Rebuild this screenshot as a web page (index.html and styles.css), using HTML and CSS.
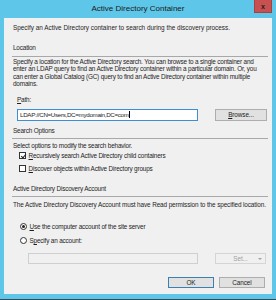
FILE: index.html
```html
<!DOCTYPE html>
<html lang="en">
<head>
  <meta charset="UTF-8" />
  <title>Active Directory Container</title>
  <link rel="stylesheet" href="styles.css">
</head>
<body>
  <div class="window">
    <!-- title bar -->
    <div class="titlebar">
      <span class="title">Active Directory Container</span>
      <span class="close">x</span>
    </div>

    <div class="content">
      <p class="intro">Specify an Active Directory container to search during the discovery process.</p>

      <!-- location -->
      <div class="group-title g-location">Location</div>
      <div class="rule"></div>
      <p class="para">Specify a location for the Active Directory search. You can browse to a single container and<br>enter an LDAP query to find an Active Directory container within a particular domain. Or, you<br>can enter a Global Catalog (GC) query to find an Active Directory container within multiple<br>domains.</p>
      <div class="label path-label"><u>P</u>ath:</div>
      <div class="field-row path-row">
        <div class="input active">LDAP://CN=Users,DC=mydomain,DC=com<span class="caret"></span></div>
        <button class="btn"><u>B</u>rowse...</button>
      </div>

      <!-- search options -->
      <div class="group-title g-search">Search Options</div>
      <div class="rule"></div>
      <p class="line select">Select options to modify the search behavior.</p>
      <div class="check cb1"><span class="box checked"></span><span><u>R</u>ecursively search Active Directory child containers</span></div>
      <div class="check cb2"><span class="box"></span><span><u>D</u>iscover objects within Active Directory groups</span></div>

      <!-- account -->
      <div class="group-title g-account">Active Directory Discovery Account</div>
      <div class="rule"></div>
      <p class="line account-note">The Active Directory Discovery Account must have Read permission to the specified location.</p>
      <div class="check r1"><span class="radio on"></span><span><u>U</u>se the computer account of the site server</span></div>
      <div class="check r2"><span class="radio"></span><span>S<u>p</u>ecify an account:</span></div>
      <div class="field-row account-row">
        <div class="input disabled"></div>
        <button class="btn disabled">Set...<span class="arrow"></span></button>
      </div>

      <div class="actions">
        <button class="btn default">OK</button>
        <button class="btn">Cancel</button>
      </div>
    </div>
  </div>
</body>
</html>
```
FILE: styles.css
```css
* { margin: 0; padding: 0; box-sizing: border-box; }
body { width: 276px; height: 300px; overflow: hidden; font-family: 'Liberation Sans', Arial, sans-serif; color: #1e1e1e; }

/* window frame */
.window {
  width: 276px; height: 300px;
  background: #5ec6e8;
  border-bottom: 1px solid #3b4a52;
  display: flex; flex-direction: column;
  padding: 0 4px 5px 4px;
}
.titlebar {
  height: 18px;
  display: flex; align-items: center; justify-content: center;
  position: relative;
}
.title { font-size: 8px; color: #1a1a1a; margin-top: -1px; }
.close {
  position: absolute; top: 0; right: 0;
  width: 18px; height: 13px;
  background: #c75050;
  border: 1px solid #a94040; border-top: none;
  color: #222; font-size: 7px; font-weight: bold;
  display: flex; align-items: center; justify-content: center;
}

/* dialog body */
.content {
  flex: 1;
  background: #f0f0f0;
  padding: 0 4px 0 8px;
  font-size: 6.4px;
  line-height: 8px;
  letter-spacing: -0.18px;
  white-space: nowrap;
}
.intro { margin-top: 6px; padding-left: 1px; letter-spacing: 0; }
.group-title { padding-left: 1px; }
.g-location { margin-top: 12px; }
.g-search { margin-top: 6px; }
.g-account { margin-top: 12px; }
.rule { height: 1px; background: #a8a8a8; margin-top: 3.5px; }
.para { margin-top: 1px; padding-left: 1px; line-height: 7.6px; }
.line { padding-left: 1px; }
.select { margin-top: 2.5px; }
.account-note { margin-top: 3.5px; letter-spacing: -0.11px; }
.label { padding-left: 1px; }
.path-label { margin-top: 8px; padding-left: 5px; }

/* inputs and buttons */
.field-row { display: flex; align-items: center; height: 12px; }
.path-row { margin-top: 5px; padding-left: 5px; }
.account-row { margin-top: 8px; height: 11px; padding-left: 16px; }
.input {
  width: 181px; height: 100%;
  background: #fff;
  border: 1px solid #a9a9a9;
  padding-left: 2px;
  display: flex; align-items: center;
  white-space: nowrap;
  font-size: 6.2px;
  letter-spacing: -0.3px;
}
.input.active { border-color: #3c8fd6; }
.input.disabled { width: 170px; background: #f0f0f0; border-color: #cfcfcf; }
.caret { display: inline-block; width: 1px; height: 7px; background: #000; margin-left: 0.5px; }
.btn {
  font-family: inherit; font-size: 6.4px; color: #1e1e1e; letter-spacing: -0.1px;
  width: 52px; height: 12px;
  background: #e1e1e1;
  border: 1px solid #adadad;
  margin-left: auto;
  display: flex; align-items: center; justify-content: center;
  position: relative;
}
.account-row .btn { height: 11px; width: 51px; margin-right: 2px; }
.path-row .btn { margin-right: 1px; }
.btn.disabled { background: #f0f0f0; border-color: #d5d5d5; color: #a0a0a0; }
.arrow {
  position: absolute; right: 3px; top: 4px;
  border-left: 2px solid transparent; border-right: 2px solid transparent;
  border-top: 2px solid #a0a0a0;
}

/* checkboxes and radios */
.check { display: flex; align-items: center; height: 8px; padding-left: 7px; }
.check span:last-child { margin-left: 2.5px; }
.cb1 { margin-top: 2px; }
.cb2 { margin-top: 5px; }
.r1 { margin-top: 14px; padding-left: 8px; }
.r2 { margin-top: 6px; padding-left: 8px; }
.box {
  width: 7px; height: 7px;
  background: #fff; border: 1px solid #333;
  position: relative;
}
.box.checked:after {
  content: '';
  position: absolute; left: 1.5px; top: 0;
  width: 2px; height: 4px;
  border: solid #222; border-width: 0 1px 1px 0;
  transform: rotate(40deg);
}
.radio {
  width: 7px; height: 7px; border-radius: 50%;
  background: #fff; border: 1px solid #333;
  position: relative;
}
.radio.on:after {
  content: '';
  position: absolute; left: 1px; top: 1px;
  width: 3px; height: 3px; border-radius: 50%;
  background: #222;
}

.actions { display: flex; justify-content: flex-end; gap: 5px; margin-top: 13px; padding-right: 3px; }
.actions .btn { margin-left: 0; width: 46px; height: 11px; }
.btn.default { border-color: #3c7fb1; }
```
